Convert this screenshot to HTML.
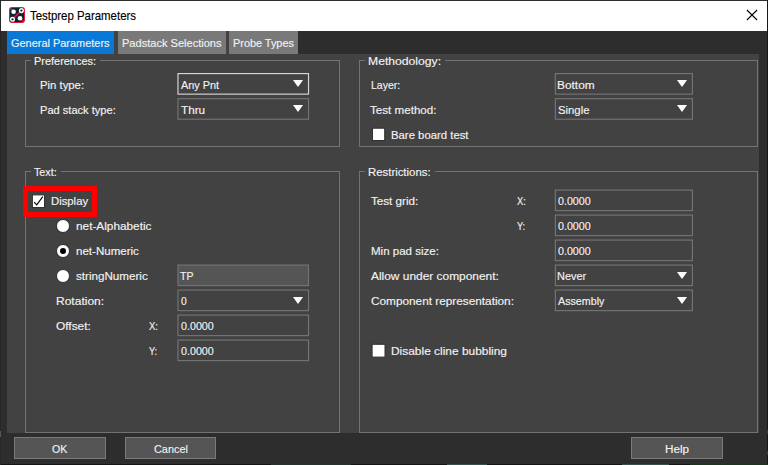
<!DOCTYPE html>
<html><head><meta charset="utf-8">
<style>
*{box-sizing:border-box;margin:0;padding:0}
html,body{width:768px;height:465px;overflow:hidden;background:#2d2d2d;font-family:"Liberation Sans",sans-serif;font-size:11.7px;color:#f2f2f2}
.a{position:absolute}
.t{-webkit-text-stroke:0.15px;position:absolute;white-space:nowrap;line-height:14px;height:14px;transform-origin:0 50%}
#title{left:1px;top:1px;width:766px;height:30px;background:#fff}
#panel{left:7px;top:54px;width:752px;height:379px;background:#424242}
.tab{top:31px;height:23px;background:#797979}
.gb{border:1px solid #737373}
.gl{background:#424242;height:4px}
.cb{border:1px solid #707070;background:#424242;height:22px}
.tb{border:1px solid #707070;background:#424242;height:22px}
.arr{width:0;height:0;border-left:5.6px solid transparent;border-right:5.6px solid transparent;border-top:7.8px solid #fff}
.chk{width:13px;height:13px;background:#fff;border:1px solid #303030}
.rad{width:14.2px;height:14.2px;border-radius:50%;background:#fff;border:1px solid #2e2e2e}
.btn{background:#555;border:1px solid #7a7a7a;height:22px}
</style></head><body>
<div class="a" style="left:0;top:0;width:768px;height:465px;background:#2d2d2d"></div>
<div class="a" style="left:0;top:463.5px;width:768px;height:1.5px;background:#151515"></div>
<div class="a" style="left:271px;top:464px;width:80px;height:1px;background:#26332f"></div>
<div class="a" style="left:447px;top:464px;width:40px;height:1px;background:#35524d"></div>
<div class="a" style="left:622px;top:464px;width:47px;height:1px;background:#35524d"></div>
<div class="a" style="left:0;top:0;width:1px;height:465px;background:#272727"></div>
<div class="a" style="left:0;top:431px;width:1px;height:6px;background:#4a5a55"></div>
<div class="a" style="left:767px;top:0;width:1px;height:465px;background:#181818"></div>
<div class="a" style="left:767px;top:430px;width:1px;height:4px;background:#1f4a24"></div>
<div class="a" style="left:767px;top:451px;width:1px;height:4px;background:#1f4a24"></div>
<div class="a" style="left:690px;top:464px;width:78px;height:1px;background:#1b341c"></div>
<div class="a" id="title"></div>
<!-- icon -->
<svg class="a" style="left:9px;top:7px" width="16" height="16" viewBox="0 0 16 16">
<rect x="0.5" y="0.5" width="15" height="15" rx="2.2" fill="#0c2433" stroke="#e0183c" stroke-width="1"/>
<line x1="1.2" y1="1.2" x2="4" y2="4" stroke="#e0183c" stroke-width="1.5"/>
<line x1="12" y1="12" x2="14.8" y2="14.8" stroke="#e0183c" stroke-width="1.5"/>
<line x1="10.8" y1="5.2" x2="5.1" y2="10.6" stroke="#e0183c" stroke-width="1.5"/>
<circle cx="4.6" cy="4.7" r="2.3" fill="#fff"/>
<circle cx="11" cy="11.2" r="2.3" fill="#fff"/>
<circle cx="12.4" cy="3.6" r="1.85" fill="#0c2433" stroke="#fff" stroke-width="1.4"/>
<circle cx="3.5" cy="12.3" r="1.85" fill="#0c2433" stroke="#fff" stroke-width="1.4"/>
</svg>
<svg class="a" style="left:746px;top:9px" width="13" height="13" viewBox="0 0 13 13"><path d="M0.9 1 L11.1 11 M11.1 1 L0.9 11" stroke="#000" stroke-width="1.1" fill="none"/></svg>

<!-- tabs -->
<div class="a" style="left:7px;top:31px;width:291px;height:23px;background:#424242"></div>
<div class="a tab" style="left:7px;width:107px;background:#0a78d7"></div>
<div class="a tab" style="left:118px;width:108px"></div>
<div class="a tab" style="left:229px;width:69px"></div>

<div class="a" id="panel"></div>

<!-- group boxes -->
<div class="a gb" style="left:25px;top:60px;width:315px;height:87px"></div>
<div class="a gb" style="left:359px;top:60px;width:399px;height:87px"></div>
<div class="a gb" style="left:25px;top:171px;width:315px;height:262px"></div>
<div class="a gb" style="left:359px;top:171px;width:399px;height:262px"></div>
<div class="a gl" style="left:31px;top:58px;width:69px"></div>
<div class="a gl" style="left:365px;top:58px;width:80px"></div>
<div class="a gl" style="left:31px;top:169px;width:30px"></div>
<div class="a gl" style="left:365px;top:169px;width:70px"></div>

<svg class="a" style="left:0;top:0" width="768" height="465" viewBox="0 0 768 465">
<rect x="177.97" y="73.58" width="130.55" height="20.55" fill="none" stroke="#d6d6d6" stroke-width="1.15"/>
<rect x="177.97" y="98.67" width="130.55" height="20.55" fill="none" stroke="#747474" stroke-width="1.15"/>
<rect x="555.38" y="73.58" width="137.05" height="20.55" fill="none" stroke="#747474" stroke-width="1.15"/>
<rect x="555.38" y="98.67" width="137.05" height="20.55" fill="none" stroke="#747474" stroke-width="1.15"/>
<rect x="177.97" y="265.07" width="130.55" height="20.55" fill="#555555" stroke="#747474" stroke-width="1.15"/>
<rect x="177.97" y="290.07" width="130.55" height="20.55" fill="none" stroke="#747474" stroke-width="1.15"/>
<rect x="177.97" y="315.07" width="130.55" height="20.55" fill="none" stroke="#747474" stroke-width="1.15"/>
<rect x="177.97" y="340.07" width="130.55" height="20.55" fill="none" stroke="#747474" stroke-width="1.15"/>
<rect x="555.38" y="190.07" width="137.05" height="20.55" fill="none" stroke="#747474" stroke-width="1.15"/>
<rect x="555.38" y="215.07" width="137.05" height="20.55" fill="none" stroke="#747474" stroke-width="1.15"/>
<rect x="555.38" y="240.07" width="137.05" height="20.55" fill="none" stroke="#747474" stroke-width="1.15"/>
<rect x="555.38" y="265.07" width="137.05" height="20.55" fill="none" stroke="#747474" stroke-width="1.15"/>
<rect x="555.38" y="290.07" width="137.05" height="20.55" fill="none" stroke="#747474" stroke-width="1.15"/>
<rect x="32.40" y="194.90" width="12.10" height="12.60" fill="#fff" stroke="#303030" stroke-width="1"/>
<rect x="372.50" y="128.20" width="12.20" height="12.30" fill="#fff" stroke="#303030" stroke-width="1"/>
<rect x="372.10" y="344.30" width="12.90" height="12.80" fill="#fff" stroke="#303030" stroke-width="1"/>
<path d="M34.2 202.2 L36.7 204.8 L42.8 196.7" stroke="#000" stroke-width="1.15" fill="none"/>
</svg>
<!-- Preferences -->
<div class="a arr" style="left:292.7px;top:80px"></div>
<div class="a arr" style="left:292.7px;top:105px"></div>

<!-- Methodology -->
<div class="a arr" style="left:676.8px;top:80px"></div>
<div class="a arr" style="left:676.8px;top:105px"></div>

<!-- Text -->
<div class="a" style="left:23px;top:185.6px;width:73.8px;height:31.7px;border:5px solid #fe0000"></div>
<div class="a rad" style="left:56.3px;top:219.2px"></div>
<div class="a rad" style="left:56.3px;top:244.1px"></div>
<div class="a" style="left:60.3px;top:248.1px;width:6.2px;height:6.2px;border-radius:50%;background:#000"></div>
<div class="a rad" style="left:56.3px;top:269px"></div>
<div class="a arr" style="left:292.7px;top:297px"></div>

<!-- Restrictions -->
<div class="a arr" style="left:676.8px;top:272px"></div>
<div class="a arr" style="left:676.8px;top:297px"></div>

<!-- buttons -->
<div class="a btn" style="left:14px;top:437px;width:92px"></div>
<div class="a btn" style="left:125px;top:437px;width:91px"></div>
<div class="a btn" style="left:631px;top:437px;width:92px"></div>


<div class="t" style="left:30.13px;top:9px;transform:scaleX(0.9217);color:#000;font-size:12.4px">Testprep Parameters</div>
<div class="t" style="left:10.86px;top:36px;transform:scaleX(0.9361)">General Parameters</div>
<div class="t" style="left:121.52px;top:36px;transform:scaleX(0.9458)">Padstack Selections</div>
<div class="t" style="left:233.08px;top:36px;transform:scaleX(0.9312)">Probe Types</div>
<div class="t" style="left:33.70px;top:54px;transform:scaleX(0.9360)">Preferences:</div>
<div class="t" style="left:367.88px;top:54px;transform:scaleX(1.0409)">Methodology:</div>
<div class="t" style="left:33.99px;top:165px;transform:scaleX(0.9183)">Text:</div>
<div class="t" style="left:368.07px;top:165px;transform:scaleX(0.9727)">Restrictions:</div>
<div class="t" style="left:39.95px;top:78px;transform:scaleX(0.9690)">Pin type:</div>
<div class="t" style="left:39.95px;top:103px;transform:scaleX(0.9481)">Pad stack type:</div>
<div class="t" style="left:181.01px;top:78px;transform:scaleX(0.9311)">Any Pnt</div>
<div class="t" style="left:180.65px;top:103px;transform:scaleX(1.0040)">Thru</div>
<div class="t" style="left:371.28px;top:78px;transform:scaleX(0.8994)">Layer:</div>
<div class="t" style="left:370.38px;top:103px;transform:scaleX(0.9942)">Test method:</div>
<div class="t" style="left:557.29px;top:78px;transform:scaleX(1.0166)">Bottom</div>
<div class="t" style="left:557.95px;top:103px;transform:scaleX(0.9681)">Single</div>
<div class="t" style="left:390.71px;top:128px;transform:scaleX(0.9698)">Bare board test</div>
<div class="t" style="left:50.60px;top:194px;transform:scaleX(0.9674)">Display</div>
<div class="t" style="left:75.91px;top:219px;transform:scaleX(1.0104)">net-Alphabetic</div>
<div class="t" style="left:75.63px;top:244px;transform:scaleX(0.9881)">net-Numeric</div>
<div class="t" style="left:76.43px;top:269px;transform:scaleX(0.9953)">stringNumeric</div>
<div class="t" style="left:180.13px;top:269px;transform:scaleX(0.8984)">TP</div>
<div class="t" style="left:55.79px;top:294px;transform:scaleX(1.0287)">Rotation:</div>
<div class="t" style="left:181.12px;top:294px;transform:scaleX(0.8802)">0</div>
<div class="t" style="left:56.19px;top:319px;transform:scaleX(1.0168)">Offset:</div>
<div class="t" style="left:148.78px;top:319px;transform:scaleX(0.8161)">X:</div>
<div class="t" style="left:148.87px;top:344px;transform:scaleX(0.7841)">Y:</div>
<div class="t" style="left:180.67px;top:319px;transform:scaleX(0.9156)">0.0000</div>
<div class="t" style="left:180.67px;top:344px;transform:scaleX(0.9156)">0.0000</div>
<div class="t" style="left:371.31px;top:194px;transform:scaleX(0.9955)">Test grid:</div>
<div class="t" style="left:516.67px;top:194px;transform:scaleX(0.8016)">X:</div>
<div class="t" style="left:516.61px;top:219px;transform:scaleX(0.7859)">Y:</div>
<div class="t" style="left:558.08px;top:194px;transform:scaleX(0.9152)">0.0000</div>
<div class="t" style="left:558.08px;top:219px;transform:scaleX(0.9152)">0.0000</div>
<div class="t" style="left:558.08px;top:244px;transform:scaleX(0.9152)">0.0000</div>
<div class="t" style="left:371.18px;top:244px;transform:scaleX(0.9857)">Min pad size:</div>
<div class="t" style="left:371.35px;top:269px;transform:scaleX(1.0196)">Allow under component:</div>
<div class="t" style="left:371.00px;top:294px;transform:scaleX(1.0093)">Component representation:</div>
<div class="t" style="left:557.12px;top:269px;transform:scaleX(0.9371)">Never</div>
<div class="t" style="left:558.10px;top:294px;transform:scaleX(0.9168)">Assembly</div>
<div class="t" style="left:390.87px;top:344px;transform:scaleX(1.0200)">Disable cline bubbling</div>
<div class="t" style="left:51.73px;top:442px;transform:scaleX(0.9035)">OK</div>
<div class="t" style="left:153.56px;top:442px;transform:scaleX(0.9310)">Cancel</div>
<div class="t" style="left:664.71px;top:442px;transform:scaleX(1.0009)">Help</div>
</body></html>
